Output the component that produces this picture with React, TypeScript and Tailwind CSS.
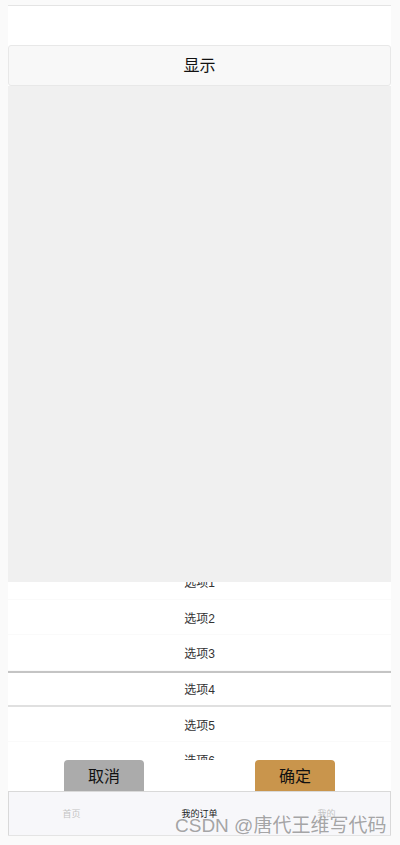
const font = { fontFamily: '"Liberation Sans", "Noto Sans CJK SC", sans-serif' };

const options = ["选项1", "选项2", "选项3", "选项4", "选项5", "选项6"];

function OptionRow({ label, index }: { label: string; index: number }) {
  return (
    <div
      className={
        index === 3
          ? "h-[36px] flex items-center justify-center pt-[2px] text-[12px] text-[#333]"
          : "h-[35.5px] flex items-center justify-center pt-[4px] text-[12px] text-[#333] border-b border-[#fafafa]"
      }
    >
      {label}
    </div>
  );
}

export default function App() {
  return (
    <div className="relative h-[845px] w-[400px] overflow-hidden bg-[#fafafa] pl-2 pr-[9px] pt-[5px] pb-[9px]" style={font}>
      <div className="flex h-full flex-col border-y border-[#e4e4e4] bg-white">
        <div className="h-[39px] shrink-0 bg-white" />
        <button className="h-[41px] shrink-0 rounded-[3px] border border-[#e8e8e8] bg-[#f8f8f8] text-[16px] text-[#111]">
          显示
        </button>
        <div className="h-[496px] shrink-0 bg-[#f0f0f0]" />

        <div className="relative flex-1">
          <div className="h-[178px] overflow-hidden">
            <div className="-mt-[18px]">
              {options.map((label, index) => (
                <OptionRow key={label} label={label} index={index} />
              ))}
            </div>
          </div>
          <div className="pointer-events-none absolute inset-x-0 top-[89px] h-[36px] border-y-2 border-t-[#c4c4c4] border-b-[#e0e0e0]" />
          <div className="flex h-[31px] items-start justify-between pl-[56px] pr-[56px]">
            <button className="h-[31px] w-[80px] rounded-t-[4px] bg-[#ababab] pt-[3px] text-[16px] text-[#111]">取消</button>
            <button className="h-[31px] w-[80px] rounded-t-[4px] bg-[#c9954c] pt-[3px] text-[16px] text-[#111]">确定</button>
          </div>
        </div>

        <div className="grid h-[44px] shrink-0 grid-cols-3 border-x border-t border-[#d9d9d9] bg-[#f7f7fa] text-[9px]">
          <div className="flex items-center justify-center pr-[2px] pt-[3px] text-[#c4c4c4]">首页</div>
          <div className="flex items-center justify-center pt-[3px] text-[#222]">我的订单</div>
          <div className="flex items-center justify-center pt-[3px] text-[#c4c4c4]">我的</div>
        </div>
      </div>
      <div className="absolute left-[175px] top-[814px] whitespace-nowrap text-[19px] leading-[24px] text-[#9a9a9a]/90">
        CSDN @唐代王维写代码
      </div>
    </div>
  );
}
